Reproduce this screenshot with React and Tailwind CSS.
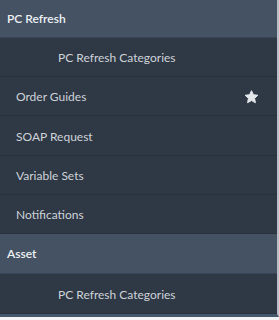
import React from "react";

function Header({ label, h = "h-[39px]" }) {
  return (
    <div className={h + " flex items-center pl-[7px] pt-[1px] bg-[#445263] text-[#eef1f4] text-[12px] font-semibold border-b border-[#3a4655]"}>
      {label}
    </div>
  );
}

function Row({ label, indent = false, star = false, h = "h-[39px]" }) {
  return (
    <div
      className={
        h + " flex items-center justify-between pt-[2px] bg-[#2f3845] text-[#ced3d9] text-[12px] border-b border-[#29313c] " +
        (indent ? "pl-[58px]" : "pl-[16px]")
      }
    >
      <span>{label}</span>
      {star && (
        <svg width="17" height="16" viewBox="0 0 24 24" className="mr-[17px]">
          <path
            d="M12 2.5l2.9 6.1 6.6.8-4.9 4.6 1.3 6.6L12 17.3l-5.9 3.3 1.3-6.6-4.9-4.6 6.6-.8z"
            fill="#e4e7ea"
            stroke="#e4e7ea"
            strokeWidth="1.5"
            strokeLinejoin="round"
          />
        </svg>
      )}
    </div>
  );
}

export default function App() {
  return (
    <div
      className="w-[279px] h-[320px] bg-[#f3f4f6] overflow-hidden"
      style={{ fontFamily: "Lato, 'Open Sans', sans-serif" }}
    >
      <div className="w-[279px] border-r-[2px] border-[#b9c0c8] border-b-[3px] border-b-[#44576b]">
        <Header label="PC Refresh" h="h-[38px]" />
        <Row label="PC Refresh Categories" indent />
        <Row label="Order Guides" star />
        <Row label="SOAP Request" h="h-[40px]" />
        <Row label="Variable Sets" />
        <Row label="Notifications" />
        <Header label="Asset" h="h-[40px]" />
        <Row label="PC Refresh Categories" indent h="h-[40px]" />
      </div>
    </div>
  );
}
